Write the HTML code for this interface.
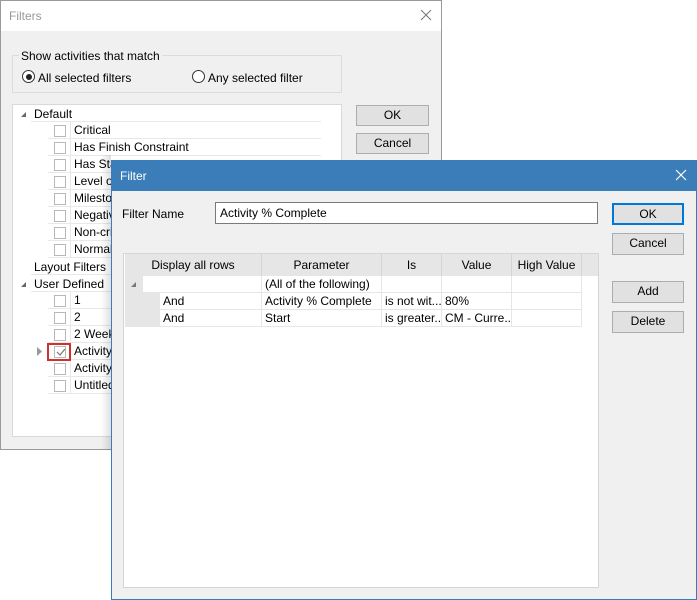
<!DOCTYPE html>
<html><head><style>
*{margin:0;padding:0;box-sizing:border-box}
body{width:697px;height:600px;background:#fff;position:relative;overflow:hidden;font-family:"Liberation Sans",Tahoma,sans-serif;font-size:12px;color:#000}
.a{position:absolute}
.t{position:absolute;white-space:nowrap;line-height:14px}
.btn{position:absolute;background:#e1e1e1;border:1px solid #adadad;text-align:center;line-height:19px;font-size:12px}
.cb{position:absolute;width:12px;height:12px;border:1px solid #b8b8b8;background:#fff}
.row{position:absolute;left:48px;width:273px;height:17px;border-bottom:1px solid #e8e8e8}
.row .cb{left:6px;top:3px}
.row span{position:absolute;left:26px;top:1px;line-height:14px;white-space:nowrap}
.row i{position:absolute;left:22px;top:0;width:1px;height:17px;background:#e8e8e8}
.gc{position:absolute;height:17px;border-right:1px solid #e6e6e6;border-bottom:1px solid #e6e6e6;background:#fff;padding-left:3px;line-height:16px;white-space:nowrap;overflow:hidden}
.hc{position:absolute;top:0;height:22px;border-right:1px solid #d5d5d5;text-align:center;line-height:22px;background:#e6e6e6}
</style></head><body>
<!-- back dialog -->
<div class="a" style="left:0;top:0;width:442px;height:450px;background:#f0f0f0;border:1px solid #9a9a9a"></div>
<div class="a" style="left:1px;top:1px;width:440px;height:30px;background:#fff"></div>
<div class="t" style="left:9px;top:9px;color:#999;font-size:12px">Filters</div>
<svg class="a" style="left:420px;top:9px" width="12" height="12"><path d="M1 1L11 11M11 1L1 11" stroke="#777" stroke-width="1"/></svg>
<div class="a" style="left:12px;top:55px;width:330px;height:38px;border:1px solid #dcdcdc"></div>
<div class="t" style="left:19px;top:49px;background:#f0f0f0;padding:0 2px">Show activities that match</div>
<div class="a" style="left:22px;top:70px;width:13px;height:13px;border:1px solid #333;border-radius:50%;background:#fff"></div>
<div class="a" style="left:25.5px;top:73.5px;width:6px;height:6px;border-radius:50%;background:#222"></div>
<div class="t" style="left:38px;top:71px">All selected filters</div>
<div class="a" style="left:192px;top:70px;width:13px;height:13px;border:1px solid #333;border-radius:50%;background:#fff"></div>
<div class="t" style="left:208px;top:71px">Any selected filter</div>
<div class="a" style="left:12px;top:104px;width:330px;height:333px;background:#fff;border:1px solid #d9d9d9"></div>
<div class="btn" style="left:356px;top:105px;width:73px;height:21px">OK</div>
<div class="btn" style="left:356px;top:133px;width:73px;height:21px">Cancel</div>
<svg class="a" style="left:20px;top:111px" width="8" height="8"><path d="M6 1V6H1Z" fill="#666"/></svg>
<div class="t" style="left:34px;top:107px">Default</div>
<div class="a" style="left:31px;top:121px;width:290px;height:1px;background:#e8e8e8"></div>
<div class="row" style="top:122px"><div class="cb"></div><i></i><span>Critical</span></div>
<div class="row" style="top:139px"><div class="cb"></div><i></i><span>Has Finish Constraint</span></div>
<div class="row" style="top:156px"><div class="cb"></div><i></i><span>Has Start</span></div>
<div class="row" style="top:173px"><div class="cb"></div><i></i><span>Level of</span></div>
<div class="row" style="top:190px"><div class="cb"></div><i></i><span>Milestone</span></div>
<div class="row" style="top:207px"><div class="cb"></div><i></i><span>Negative</span></div>
<div class="row" style="top:224px"><div class="cb"></div><i></i><span>Non-critical</span></div>
<div class="row" style="top:241px"><div class="cb"></div><i></i><span>Normal</span></div>
<div class="t" style="left:34px;top:260px">Layout Filters</div>
<div class="a" style="left:31px;top:274px;width:290px;height:1px;background:#e8e8e8"></div>
<svg class="a" style="left:20px;top:281px" width="8" height="8"><path d="M6 1V6H1Z" fill="#666"/></svg>
<div class="t" style="left:34px;top:277px">User Defined</div>
<div class="a" style="left:31px;top:291px;width:290px;height:1px;background:#e8e8e8"></div>
<div class="row" style="top:292px"><div class="cb"></div><i></i><span>1</span></div>
<div class="row" style="top:309px"><div class="cb"></div><i></i><span>2</span></div>
<div class="row" style="top:326px"><div class="cb"></div><i></i><span>2 Weeks</span></div>
<div class="row" style="top:343px"><div class="cb"></div><i></i><span>Activity</span></div>
<div class="row" style="top:360px"><div class="cb"></div><i></i><span>Activity</span></div>
<div class="row" style="top:377px"><div class="cb"></div><i></i><span>Untitled</span></div>
<svg class="a" style="left:37px;top:347px" width="6" height="9"><path d="M0 0L5 4.5L0 9Z" fill="#999"/></svg>
<div class="a" style="left:47px;top:343px;width:24px;height:18px;border:2px solid #d32f2f"></div>
<svg class="a" style="left:56px;top:348px" width="10" height="8"><path d="M1 4L4 7L9 1" stroke="#777" fill="none" stroke-width="1.2"/></svg>
<!-- shadow -->
<div class="a" style="left:101px;top:155px;width:10px;height:295px;background:linear-gradient(to right,rgba(0,0,0,0),rgba(0,0,0,0.12))"></div>
<!-- front dialog -->
<div class="a" style="left:111px;top:160px;width:586px;height:440px;background:#f0f0f0;border:1px solid #3a7db8"></div>
<div class="a" style="left:111px;top:160px;width:586px;height:31px;background:#3a7db8"></div>
<div class="t" style="left:120px;top:169px;color:#fff">Filter</div>
<svg class="a" style="left:675px;top:169px" width="12" height="12"><path d="M1 1L11 11M11 1L1 11" stroke="#fff" stroke-width="1.2"/></svg>
<div class="t" style="left:122px;top:207px">Filter Name</div>
<div class="a" style="left:215px;top:202px;width:383px;height:22px;background:#fff;border:1px solid #7a7a7a"></div>
<div class="t" style="left:220px;top:206px">Activity % Complete</div>
<div class="btn" style="left:612px;top:203px;width:72px;height:22px;border:2px solid #0078d7;line-height:18px">OK</div>
<div class="btn" style="left:612px;top:233px;width:72px;height:22px">Cancel</div>
<div class="btn" style="left:612px;top:281px;width:72px;height:22px">Add</div>
<div class="btn" style="left:612px;top:311px;width:72px;height:22px">Delete</div>
<div class="a" style="left:123px;top:253px;width:476px;height:335px;background:#fff;border:1px solid #d5d5d5">
 <div class="a" style="left:1px;top:0;width:473px;height:22px;background:#e6e6e6"></div>
 <div class="hc" style="left:1px;width:137px">Display all rows</div>
 <div class="hc" style="left:138px;width:120px">Parameter</div>
 <div class="hc" style="left:258px;width:60px">Is</div>
 <div class="hc" style="left:318px;width:70px">Value</div>
 <div class="hc" style="left:388px;width:70px">High Value</div>
 <div class="a" style="left:1px;top:22px;width:18px;height:17px;background:#e6e6e6"></div>
 <svg class="a" style="left:6px;top:27px" width="7" height="7"><path d="M6 1V6H1Z" fill="#777"/></svg>
 <div class="gc" style="left:19px;top:22px;width:119px"></div>
 <div class="gc" style="left:138px;top:22px;width:120px">(All of the following)</div>
 <div class="gc" style="left:258px;top:22px;width:60px"></div>
 <div class="gc" style="left:318px;top:22px;width:70px"></div>
 <div class="gc" style="left:388px;top:22px;width:70px"></div>
 <div class="a" style="left:1px;top:39px;width:35px;height:34px;background:#e6e6e6"></div>
 <div class="gc" style="left:36px;top:39px;width:102px">And</div>
 <div class="gc" style="left:138px;top:39px;width:120px">Activity % Complete</div>
 <div class="gc" style="left:258px;top:39px;width:60px">is not wit...</div>
 <div class="gc" style="left:318px;top:39px;width:70px">80%</div>
 <div class="gc" style="left:388px;top:39px;width:70px"></div>
 <div class="gc" style="left:36px;top:56px;width:102px">And</div>
 <div class="gc" style="left:138px;top:56px;width:120px">Start</div>
 <div class="gc" style="left:258px;top:56px;width:60px">is greater...</div>
 <div class="gc" style="left:318px;top:56px;width:70px">CM - Curre...</div>
 <div class="gc" style="left:388px;top:56px;width:70px"></div>
</div>
</body></html>
